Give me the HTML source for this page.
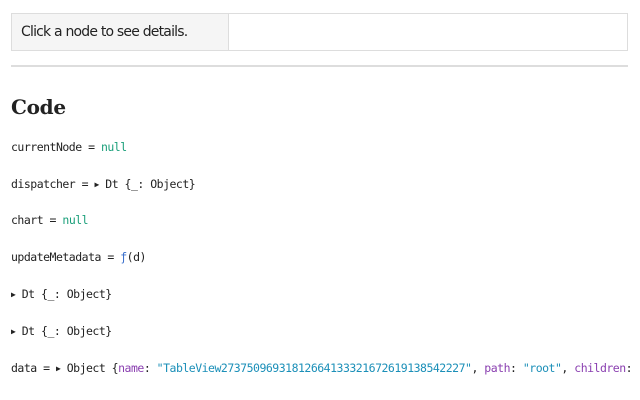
<!DOCTYPE html>
<html><head><style>
html,body{margin:0;padding:0;background:#fff;width:640px;height:400px;overflow:hidden}
.box{position:absolute;left:11px;top:13px;width:615px;height:36px;border:1px solid #ddd;display:flex}
.l{width:207px;background:#f5f5f5;border-right:1px solid #ddd;font:14px "DejaVu Sans","Liberation Sans",sans-serif;color:#222;line-height:36px;padding-left:9px;letter-spacing:-0.8px}
.hr{position:absolute;left:11px;top:65px;width:617px;height:2px;background:#ddd}
h2{position:absolute;left:11px;top:95px;margin:0;font:bold 20px "DejaVu Serif","Liberation Serif",serif;color:#222;letter-spacing:-0.3px}
.c{position:absolute;left:11px;font:11.5px "DejaVu Sans Mono","Liberation Mono",monospace;letter-spacing:-0.5px;color:#222;white-space:nowrap}
.n{color:#1a9f7a}.f{color:#3a6fcc}.k{color:#8a3fb0}.s{color:#1b8fb8}
.t{font-size:8px;vertical-align:1px}
</style></head><body>
<div class="box"><div class="l">Click a node to see details.</div></div>
<div class="hr"></div>
<h2>Code</h2>
<div class="c" style="top:140px">currentNode = <span class="n">null</span></div>
<div class="c" style="top:177px">dispatcher = <span class="t">▶</span> Dt {_: Object}</div>
<div class="c" style="top:213px">chart = <span class="n">null</span></div>
<div class="c" style="top:250px">updateMetadata = <span class="f">ƒ</span>(d)</div>
<div class="c" style="top:287px"><span class="t">▶</span> Dt {_: Object}</div>
<div class="c" style="top:324px"><span class="t">▶</span> Dt {_: Object}</div>
<div class="c" style="top:361px">data = <span class="t">▶</span> Object {<span class="k">name</span>: <span class="s">"TableView27375096931812664133321672619138542227"</span>, <span class="k">path</span>: <span class="s">"root"</span>, <span class="k">children</span>:</div>
</body></html>
